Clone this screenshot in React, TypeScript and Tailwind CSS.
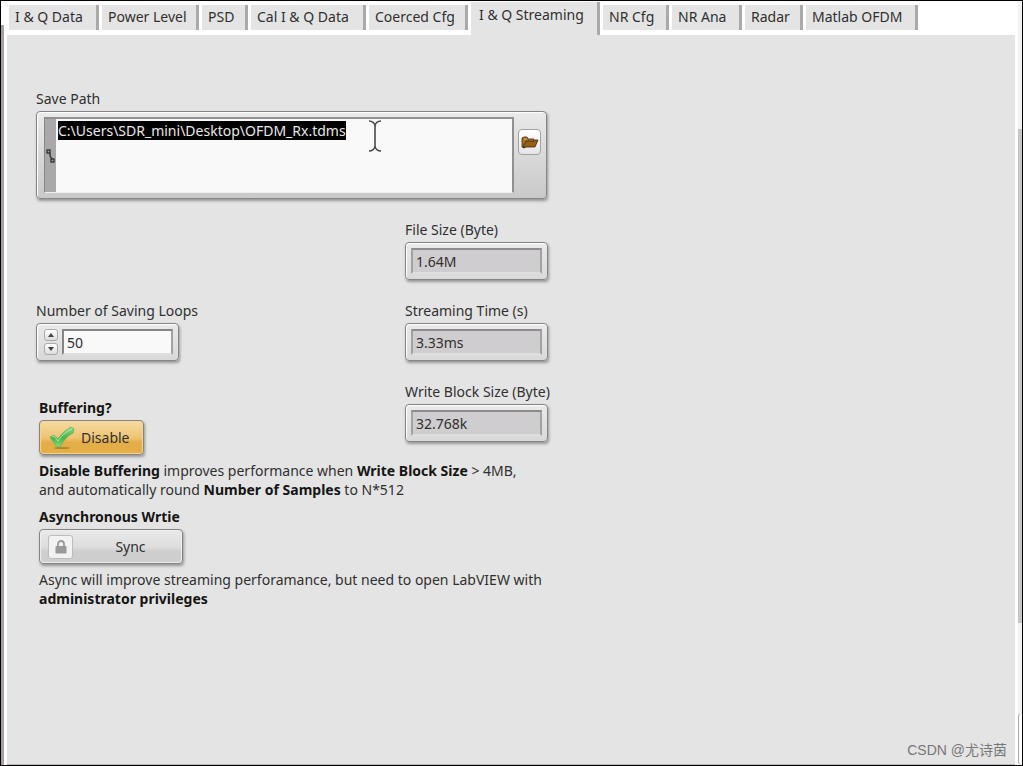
import { useState, type ReactNode } from "react";

type Tab = {
  label: string;
  width: string;
};

const tabs: Tab[] = [
  { label: "I & Q Data", width: "w-[90px]" },
  { label: "Power Level", width: "w-[97px]" },
  { label: "PSD", width: "w-[46px]" },
  { label: "Cal I & Q Data", width: "w-[115px]" },
  { label: "Coerced Cfg", width: "w-[99px]" },
  { label: "I & Q Streaming", width: "w-[129px]" },
  { label: "NR Cfg", width: "w-[66px]" },
  { label: "NR Ana", width: "w-[70px]" },
  { label: "Radar", width: "w-[58px]" },
  { label: "Matlab OFDM", width: "w-[112px]" },
];

const frame =
  "rounded-[4px] border border-[#858585] bg-linear-to-b from-[#eaeaea] shadow-[1px_2px_3px_rgba(0,0,0,0.35),inset_1px_1px_1px_#ffffff]";

type FieldProps = {
  id: string;
  label: string;
  children: ReactNode;
};

function Field({ id, label, children }: FieldProps) {
  return (
    <div className="flex flex-col gap-[2px]">
      <label htmlFor={id} className="h-5 leading-5 whitespace-nowrap">
        {label}
      </label>
      {children}
    </div>
  );
}

type IndicatorProps = {
  id: string;
  label: string;
  value: string;
};

function Indicator({ id, label, value }: IndicatorProps) {
  return (
    <Field id={id} label={label}>
      <div className={`flex h-[38px] w-[143px] to-[#d9d9d9] p-[5px] ${frame}`}>
        <input
          id={id}
          readOnly
          value={value}
          className="w-full min-w-0 border-2 border-t-[#8c8c8c] border-r-[#a2a2a2] border-b-[#dedede] border-l-[#a2a2a2] bg-[#cfcdd0] px-[3px] outline-none"
        />
      </div>
    </Field>
  );
}

function PathIcon() {
  return (
    <svg width="10" height="16" viewBox="0 0 10 16" fill="none" stroke="#252525" strokeWidth="1.2">
      <rect x="1" y="2" width="3" height="3" />
      <path d="M4 5v3l2 3" />
      <rect x="5" y="11" width="3" height="3" />
    </svg>
  );
}

function FolderIcon() {
  return (
    <svg width="18" height="14" viewBox="0 0 18 14">
      <path d="M1 12V3l2-1h3l1 2h6v3l-10 6z" fill="#a8742a" stroke="#3c2808" strokeWidth="0.8" />
      <path d="M2 12 5 6l8 .3 1-1.300h3L14 12z" fill="#956012" stroke="#3c2808" strokeWidth="0.8" />
      <path d="M3 4h3" stroke="#d9a95c" />
    </svg>
  );
}

function CheckIcon() {
  return (
    <svg width="26" height="24" viewBox="0 0 26 24">
      <defs>
        <linearGradient id="check-fill" x1="0" y1="0" x2="0" y2="1">
          <stop offset="0" stopColor="#8fd98c" />
          <stop offset="0.55" stopColor="#43b44d" />
          <stop offset="1" stopColor="#8be070" />
        </linearGradient>
      </defs>
      <ellipse cx="13" cy="22" rx="8" ry="1" fill="#806426" opacity="0.55" />
      <path
        d="M1 11 5 9 9 13C13 7 17 4 22 1l3 2-1 4C18 10 14 15 11 21L7 20z"
        fill="url(#check-fill)"
        stroke="#58b35c"
        strokeWidth="0.7"
      />
      <path d="M3 11l2-1 4 5C13 9 18 5 23 3" fill="none" stroke="#c5f2bd" strokeWidth="0.8" />
    </svg>
  );
}

function LockIcon() {
  return (
    <svg width="12" height="14" viewBox="0 0 12 14">
      <path d="M3 7V4a3 3 0 0 1 6 0v3" fill="none" stroke="#999999" strokeWidth="1.8" />
      <rect x="0.5" y="6" width="11" height="7.5" rx="0.8" fill="#999999" />
    </svg>
  );
}

function TextCursor() {
  return (
    <svg
      className="pointer-events-none absolute top-0 left-[322px]"
      width="16"
      height="34"
      viewBox="0 0 16 34"
      fill="none"
      stroke="#4a4a4a"
      strokeWidth="1.6"
    >
      <path d="M2 2C5 2 8 4 8 7c0-3 3-5 6-5M8 7v20M2 32c3 0 6-2 6-5 0 3 3 5 6 5" />
    </svg>
  );
}

function SavePath() {
  return (
    <Field id="save-path" label="Save Path">
      <div className={`flex h-[88px] to-[#c9c9c9] py-[5px] pr-[5px] pl-[7px] ${frame}`}>
        <div className="relative flex min-w-0 flex-1 border-t-2 border-r-2 border-b border-l border-t-[#919191] border-r-[#919191] border-b-[#eeeeee] border-l-[#858585] bg-[#f9f9f9]">
          <div className="flex w-[11px] items-center justify-center bg-[#aaa8ab]">
            <PathIcon />
          </div>
          <div
            id="save-path"
            role="textbox"
            aria-label="Save Path"
            contentEditable
            suppressContentEditableWarning
            className="min-w-0 flex-1 px-[2px] pt-[2px] leading-[19px] outline-none"
          >
            <span className="inline-block bg-black text-[#e8e8e8]">
              C:\Users\SDR_mini\Desktop\OFDM_Rx.tdms
            </span>
          </div>
          <TextCursor />
        </div>
        <div className="flex w-[27px] justify-end pt-3">
          <button
            type="button"
            aria-label="Browse"
            className="flex h-[26px] w-[23px] items-center justify-center rounded-[4px] border border-[#a2a2a2] bg-linear-to-b from-white to-[#e5e5e5]"
          >
            <FolderIcon />
          </button>
        </div>
      </div>
    </Field>
  );
}

function SavingLoops() {
  const [loops, setLoops] = useState(50);
  const stepClass =
    "flex h-3 w-[14px] items-center justify-center rounded-[3px] border border-[#aaaaaa] bg-linear-to-b from-white to-[#dddddd]";

  return (
    <Field id="loops" label="Number of Saving Loops">
      <div className={`flex h-[38px] w-[143px] gap-1 to-[#d9d9d9] p-[5px] pl-[7px] ${frame}`}>
        <div className="flex flex-col justify-center gap-[2px]">
          <button type="button" aria-label="Increase" className={stepClass} onClick={() => setLoops(loops + 1)}>
            <svg width="6" height="4" viewBox="0 0 6 4">
              <path d="M0 4 3 0l3 4z" fill="#444444" />
            </svg>
          </button>
          <button type="button" aria-label="Decrease" className={stepClass} onClick={() => setLoops(loops - 1)}>
            <svg width="6" height="4" viewBox="0 0 6 4">
              <path d="M0 0h6L3 4z" fill="#444444" />
            </svg>
          </button>
        </div>
        <input
          id="loops"
          inputMode="numeric"
          value={loops}
          onChange={(event) => setLoops(Number(event.target.value) || 0)}
          className="w-full min-w-0 border-2 border-t-[#858585] border-r-[#a2a2a2] border-b-[#dedede] border-l-[#858585] bg-[#f9f9f9] px-[3px] outline-none"
        />
      </div>
    </Field>
  );
}

export default function App() {
  const [activeTab, setActiveTab] = useState("I & Q Streaming");

  return (
    <div className="flex min-h-screen border border-black bg-white font-['Noto_Sans','Noto_Sans_CJK_SC',sans-serif] text-[14px] text-[#303030]">
      <div className="mt-6 w-[3px] bg-[#a5a1a1]" />
      <div className="flex min-w-0 flex-1 flex-col pl-[3px]">
        <div role="tablist" className="flex h-[34px] items-start gap-[3px] pl-[2px]">
          {tabs.map((tab) => (
            <button
              key={tab.label}
              type="button"
              role="tab"
              aria-selected={tab.label === activeTab}
              onClick={() => setActiveTab(tab.label)}
              className={`shrink-0 border-r-[3px] border-r-[#aaaaaa] bg-[#e4e4e4] text-left whitespace-nowrap ${tab.width} ${
                tab.label === activeTab ? "mt-px h-[33px] pb-2 pl-2" : "mt-1 h-[25px] pb-[2px] pl-[6px]"
              }`}
            >
              {tab.label}
            </button>
          ))}
        </div>

        <main className="relative flex-1 border-b border-[#b5b5b5] bg-[#e4e4e4] pt-[54px] pr-4 pl-[29px]">
          <div className="max-w-[516px]">
            <div className="max-w-[511px]">
              <SavePath />
            </div>

            <div className="mt-[21px] flex justify-between">
              <div className="flex flex-col pt-[81px]">
                <SavingLoops />
                <div className="mt-[37px] ml-[3px] flex flex-col items-start gap-[2px]">
                  <label htmlFor="buffering" className="h-5 leading-5 font-bold text-[#151515]">
                    Buffering?
                  </label>
                  <button
                    id="buffering"
                    type="button"
                    className="flex h-[35px] w-[105px] items-center gap-[6px] rounded-[4px] border border-[#858585] bg-linear-to-b from-[#f5dba1] via-[#eec475] to-[#e5ad45] to-65% pl-[9px] shadow-[1px_2px_3px_rgba(0,0,0,0.35),inset_0_0_1px_1px_#f6d592]"
                  >
                    <CheckIcon />
                    Disable
                  </button>
                </div>
              </div>

              <div className="flex w-[147px] flex-col gap-[21px]">
                <Indicator id="file-size" label="File Size (Byte)" value="1.64M" />
                <Indicator id="streaming-time" label="Streaming Time (s)" value="3.33ms" />
                <Indicator id="block-size" label="Write Block Size (Byte)" value="32.768k" />
              </div>
            </div>

            <div className="ml-[3px]">
              <p className="mt-[6px] leading-[19px]">
                <b className="text-[#151515]">Disable Buffering</b> improves performance when{" "}
                <b className="text-[#151515]">Write Block Size</b> &gt; 4MB,
                <br />
                and automatically round <b className="text-[#151515]">Number of Samples</b> to N*512
              </p>

              <div className="mt-2 flex flex-col items-start gap-[2px]">
                <label htmlFor="async" className="h-5 leading-5 font-bold text-[#151515]">
                  Asynchronous Wrtie
                </label>
                <button
                  id="async"
                  type="button"
                  className="flex h-[35px] w-[144px] items-center rounded-[4px] border border-[#858585] bg-linear-to-b from-[#e9e9e9] via-[#dedede] to-[#cecece] to-65% pl-2 shadow-[1px_2px_3px_rgba(0,0,0,0.35),inset_0_0_1px_1px_#eeeeee]"
                >
                  <span className="flex h-6 w-[25px] items-center justify-center rounded-[3px] border border-[#bdbdbd] bg-[#f2f2f2]">
                    <LockIcon />
                  </span>
                  <span className="flex-1 pl-[6px] text-center">Sync</span>
                </button>
              </div>

              <p className="mt-[6px] leading-[19px]">
                Async will improve streaming perforamance, but need to open LabVIEW with
                <br />
                <b className="text-[#151515]">administrator privileges</b>
              </p>
            </div>
          </div>

          <span className="absolute right-[8px] bottom-[4px] font-['Liberation_Sans','Noto_Sans_CJK_SC',sans-serif] leading-5 text-[#777777]">
            CSDN @尤诗茵
          </span>
        </main>
      </div>

      <div className="ml-[3px] flex w-1 flex-col bg-[#f3f3f3] pt-32">
        <div className="h-[494px] bg-[#c8c6c9]" />
        <div className="mt-auto h-[52px] rounded-l-[4px] border-l border-[#aaaaaa] bg-white" />
      </div>
    </div>
  );
}
